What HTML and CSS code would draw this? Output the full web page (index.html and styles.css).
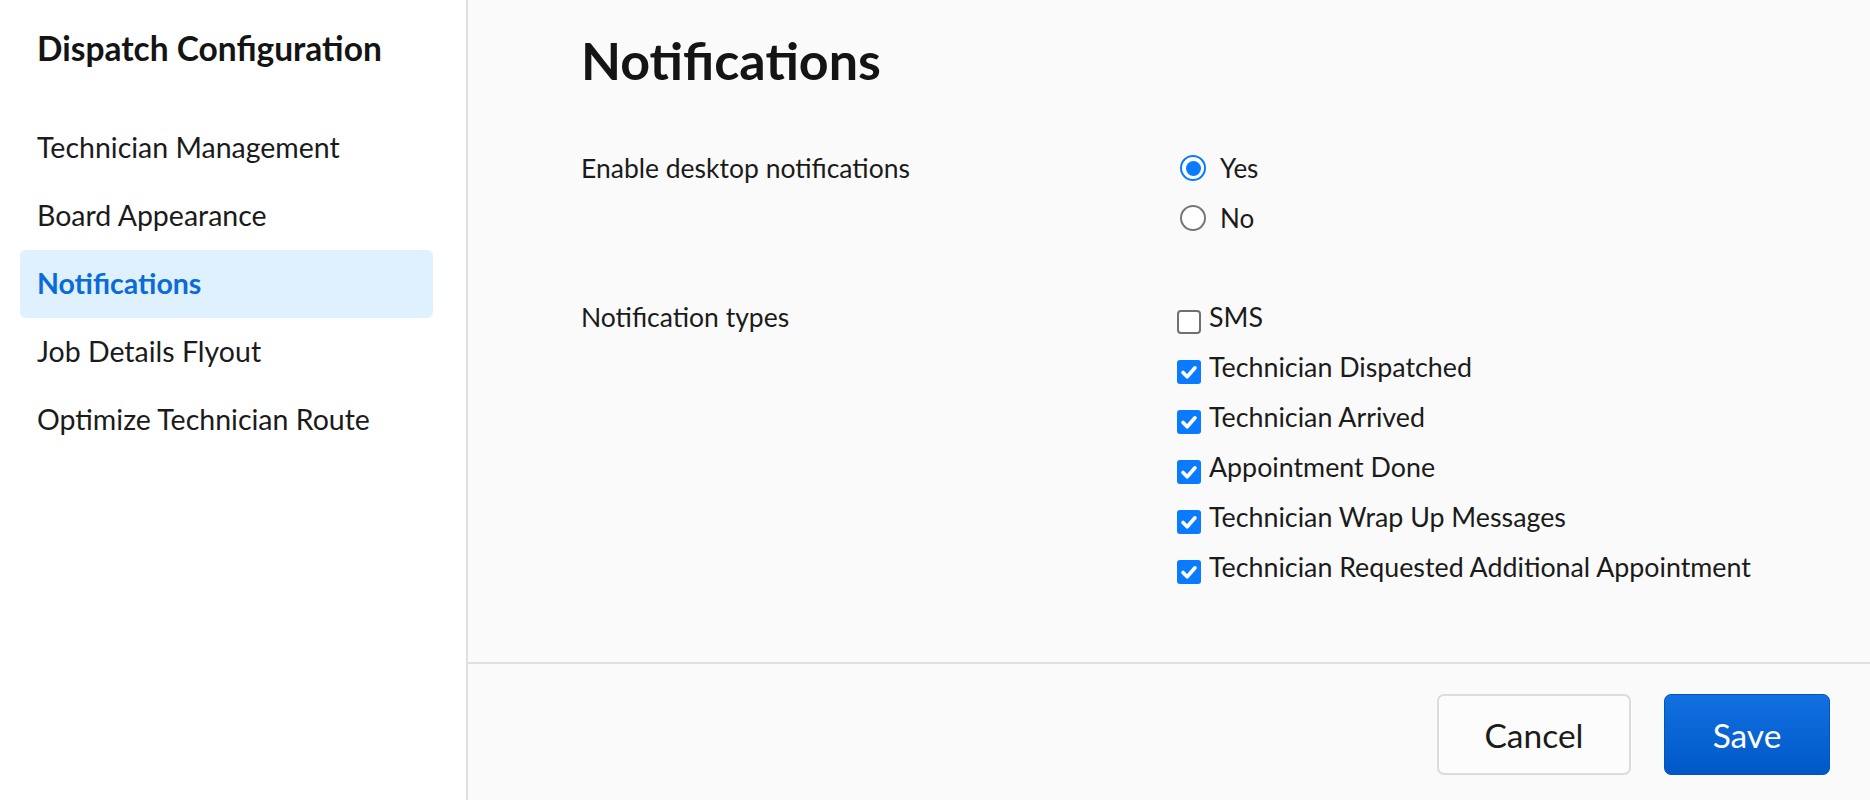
FILE: index.html
```html
<!DOCTYPE html>
<html lang="en">
<head>
<meta charset="utf-8">
<title>Dispatch Configuration - Notifications</title>
<link rel="stylesheet" href="styles.css">
</head>
<body>
<div class="app">
  <aside class="sidebar">
    <h2 class="side-title">Dispatch Configuration</h2>
    <nav class="nav">
      <a class="nav-item">Technician Management</a>
      <a class="nav-item">Board Appearance</a>
      <a class="nav-item active">Notifications</a>
      <a class="nav-item">Job Details Flyout</a>
      <a class="nav-item">Optimize Technician Route</a>
    </nav>
  </aside>
  <main class="main">
    <div class="content">
      <h1 class="page-title">Notifications</h1>
      <div class="form">
        <div class="form-row">
          <div class="field-label">Enable desktop notifications</div>
          <div class="controls">
            <label class="radio"><span class="radio-dot on"></span><span>Yes</span></label>
            <label class="radio"><span class="radio-dot"></span><span>No</span></label>
          </div>
        </div>
        <div class="form-row">
          <div class="field-label">Notification types</div>
          <div class="controls">
            <label class="check"><span class="box"></span><span>SMS</span></label>
            <label class="check"><span class="box on"><svg viewBox="0 0 24 24"><path d="M6 12.5 L10.2 16.8 L18 7.8"/></svg></span><span>Technician Dispatched</span></label>
            <label class="check"><span class="box on"><svg viewBox="0 0 24 24"><path d="M6 12.5 L10.2 16.8 L18 7.8"/></svg></span><span>Technician Arrived</span></label>
            <label class="check"><span class="box on"><svg viewBox="0 0 24 24"><path d="M6 12.5 L10.2 16.8 L18 7.8"/></svg></span><span>Appointment Done</span></label>
            <label class="check"><span class="box on"><svg viewBox="0 0 24 24"><path d="M6 12.5 L10.2 16.8 L18 7.8"/></svg></span><span>Technician Wrap Up Messages</span></label>
            <label class="check"><span class="box on"><svg viewBox="0 0 24 24"><path d="M6 12.5 L10.2 16.8 L18 7.8"/></svg></span><span>Technician Requested Additional Appointment</span></label>
          </div>
        </div>
      </div>
    </div>
    <footer class="footer">
      <button class="btn btn-secondary">Cancel</button>
      <button class="btn btn-primary">Save</button>
    </footer>
  </main>
</div>
</body>
</html>
```

FILE: styles.css
```css
html, body {
  margin: 0;
  padding: 0;
}
body {
  font-family: "Lato", "Noto Sans", sans-serif;
  color: #1b1b1b;
  background: #fafafa;
}
.app {
  display: flex;
  height: 800px;
}
.sidebar {
  box-sizing: border-box;
  width: 468px;
  flex: none;
  background: #fff;
  border-right: 2px solid #e0e0e0;
  padding: 30px 33px 0 20px;
}
.side-title {
  margin: 0 0 48px 17px;
  font-size: 33.5px;
  line-height: 36px;
  font-weight: 700;
  color: #141414;
}
.nav {
  display: flex;
  flex-direction: column;
}
.nav-item {
  box-sizing: border-box;
  height: 68px;
  display: flex;
  align-items: center;
  padding: 0 17px 2px;
  font-size: 28.5px;
  border-radius: 6px;
  color: #1b1b1b;
}
.nav-item.active {
  background: #dff0fe;
  color: #0a6bd9;
  font-weight: 700;
}
.main {
  flex: 1;
  display: flex;
  flex-direction: column;
  background: #fafafa;
}
.content {
  flex: 1;
  padding: 30px 0 0 113px;
}
.page-title {
  margin: 0;
  font-size: 52px;
  line-height: 60px;
  font-weight: 700;
  color: #141414;
}
.form {
  display: flex;
  flex-direction: column;
  gap: 63px;
  margin-top: 60px;
}
.form-row {
  display: grid;
  grid-template-columns: 596px 1fr;
}
.field-label {
  font-size: 26.5px;
  line-height: 36px;
}
.controls {
  display: flex;
  flex-direction: column;
  gap: 14px;
}
.radio {
  display: flex;
  align-items: center;
  gap: 14px;
  height: 36px;
  margin-left: 3px;
  font-size: 26px;
}
.radio-dot {
  box-sizing: border-box;
  width: 26px;
  height: 26px;
  border-radius: 50%;
  border: 2.5px solid #777;
  background: #fff;
  display: flex;
  align-items: center;
  justify-content: center;
}
.radio-dot.on {
  border-color: #0a7aff;
}
.radio-dot.on::after {
  content: "";
  width: 15px;
  height: 15px;
  border-radius: 50%;
  background: #0a7aff;
}
.check {
  display: flex;
  align-items: flex-start;
  gap: 8px;
  font-size: 26.8px;
  line-height: 36px;
}
.box {
  box-sizing: border-box;
  width: 24px;
  height: 24px;
  margin-top: 11px;
  border-radius: 4px;
  border: 2px solid #707070;
  background: #fff;
  flex: none;
}
.box.on {
  border: none;
  background: #0a7aff;
  border-radius: 3px;
}
.box svg {
  width: 24px;
  height: 24px;
  display: block;
}
.box svg path {
  fill: none;
  stroke: #fff;
  stroke-width: 3.6;
  stroke-linecap: round;
  stroke-linejoin: round;
}
.footer {
  border-top: 2px solid #e0e0e0;
  padding: 30px 40px 25px;
  display: flex;
  justify-content: flex-end;
  gap: 33px;
}
.btn {
  height: 81px;
  font-family: "Lato", "Noto Sans", sans-serif;
  font-size: 33.5px;
  border-radius: 7px;
  cursor: pointer;
}
.btn-secondary {
  width: 194px;
  background: #fcfcfc;
  border: 2px solid #dcdcdc;
  color: #1b1b1b;
}
.btn-primary {
  width: 166px;
  background: linear-gradient(#1270e0, #0058c8);
  border: 1px solid #0055c0;
  color: #fff;
}
```
